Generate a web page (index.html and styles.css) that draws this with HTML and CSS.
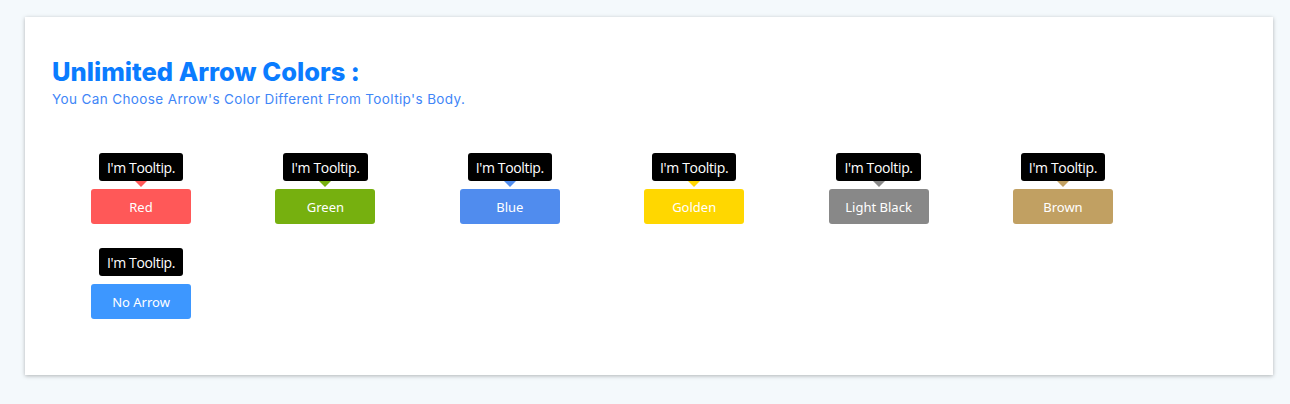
FILE: index.html
```html
<!DOCTYPE html>
<html>
<head>
<meta charset="utf-8">
<link rel="stylesheet" href="styles.css">
</head>
<body>
<div class="card">
  <h2 class="title">Unlimited Arrow Colors :</h2>
  <p class="subtitle">You Can Choose Arrow's Color Different From Tooltip's Body.</p>
  <div class="grid">
    <div class="item red"><div class="tip">I'm Tooltip.<span class="arrow"></span></div><div class="btn">Red</div></div>
    <div class="item green"><div class="tip">I'm Tooltip.<span class="arrow"></span></div><div class="btn">Green</div></div>
    <div class="item blue"><div class="tip">I'm Tooltip.<span class="arrow"></span></div><div class="btn">Blue</div></div>
    <div class="item golden"><div class="tip">I'm Tooltip.<span class="arrow"></span></div><div class="btn">Golden</div></div>
    <div class="item lblack"><div class="tip">I'm Tooltip.<span class="arrow"></span></div><div class="btn">Light Black</div></div>
    <div class="item brown"><div class="tip">I'm Tooltip.<span class="arrow"></span></div><div class="btn">Brown</div></div>
    <div class="item noarrow"><div class="tip">I'm Tooltip.</div><div class="btn">No Arrow</div></div>
  </div>
</div>
</body>
</html>
```
FILE: styles.css
```css
html, body {
  margin: 0;
  padding: 0;
}
body {
  background: #f4f9fc;
  padding: 17px 17px 29px 25px;
  font-family: "Inter", "Noto Sans", sans-serif;
}
.card {
  width: 1248px;
  height: 358px;
  box-sizing: border-box;
  background: #fff;
  box-shadow: 0 1px 4px rgba(0,0,0,0.28);
  padding: 40px 27px 0 27px;
}
.title {
  margin: 0;
  font-family: "Inter", sans-serif;
  font-weight: 800;
  font-size: 25.5px;
  line-height: 30px;
  color: #0a7cff;
  letter-spacing: 0;
}
.subtitle {
  margin: 3px 0 0 0;
  font-family: "Inter", sans-serif;
  font-weight: 400;
  font-size: 13.5px;
  line-height: 18px;
  color: #3f86f7;
  letter-spacing: 0.38px;
}
.grid {
  margin: 45px 0 0 39px;
  display: grid;
  grid-template-columns: repeat(6, 100px);
  column-gap: 84.4px;
  row-gap: 24px;
}
.item {
  display: flex;
  flex-direction: column;
  align-items: center;
}
.tip {
  position: relative;
  background: #000;
  color: #fff;
  border-radius: 3px;
  height: 28px;
  padding: 0 8px;
  display: flex;
  align-items: center;
  font-family: "Open Sans", sans-serif;
  font-size: 14px;
  letter-spacing: -0.35px;
  margin-bottom: 8px;
}
.arrow {
  position: absolute;
  left: 50%;
  top: 100%;
  margin-left: -6px;
  width: 0;
  height: 0;
  border-left: 6px solid transparent;
  border-right: 6px solid transparent;
  border-top: 6px solid currentColor;
}
.btn {
  width: 100px;
  height: 35px;
  border-radius: 3px;
  color: #fff;
  display: flex;
  align-items: center;
  justify-content: center;
  font-family: "Noto Sans", sans-serif;
  font-size: 13px;
}
.red .btn { background: #ff5858; }
.red .arrow { border-top-color: #ff5858; }
.green .btn { background: #76b00f; }
.green .arrow { border-top-color: #76b00f; }
.blue .btn { background: #508cee; }
.blue .arrow { border-top-color: #508cee; }
.golden .btn { background: #ffd700; }
.golden .arrow { border-top-color: #ffd700; }
.lblack .btn { background: #888888; }
.lblack .arrow { border-top-color: #888888; }
.brown .btn { background: #c1a062; }
.brown .arrow { border-top-color: #c1a062; }
.noarrow .btn { background: #3d97ff; }
```
